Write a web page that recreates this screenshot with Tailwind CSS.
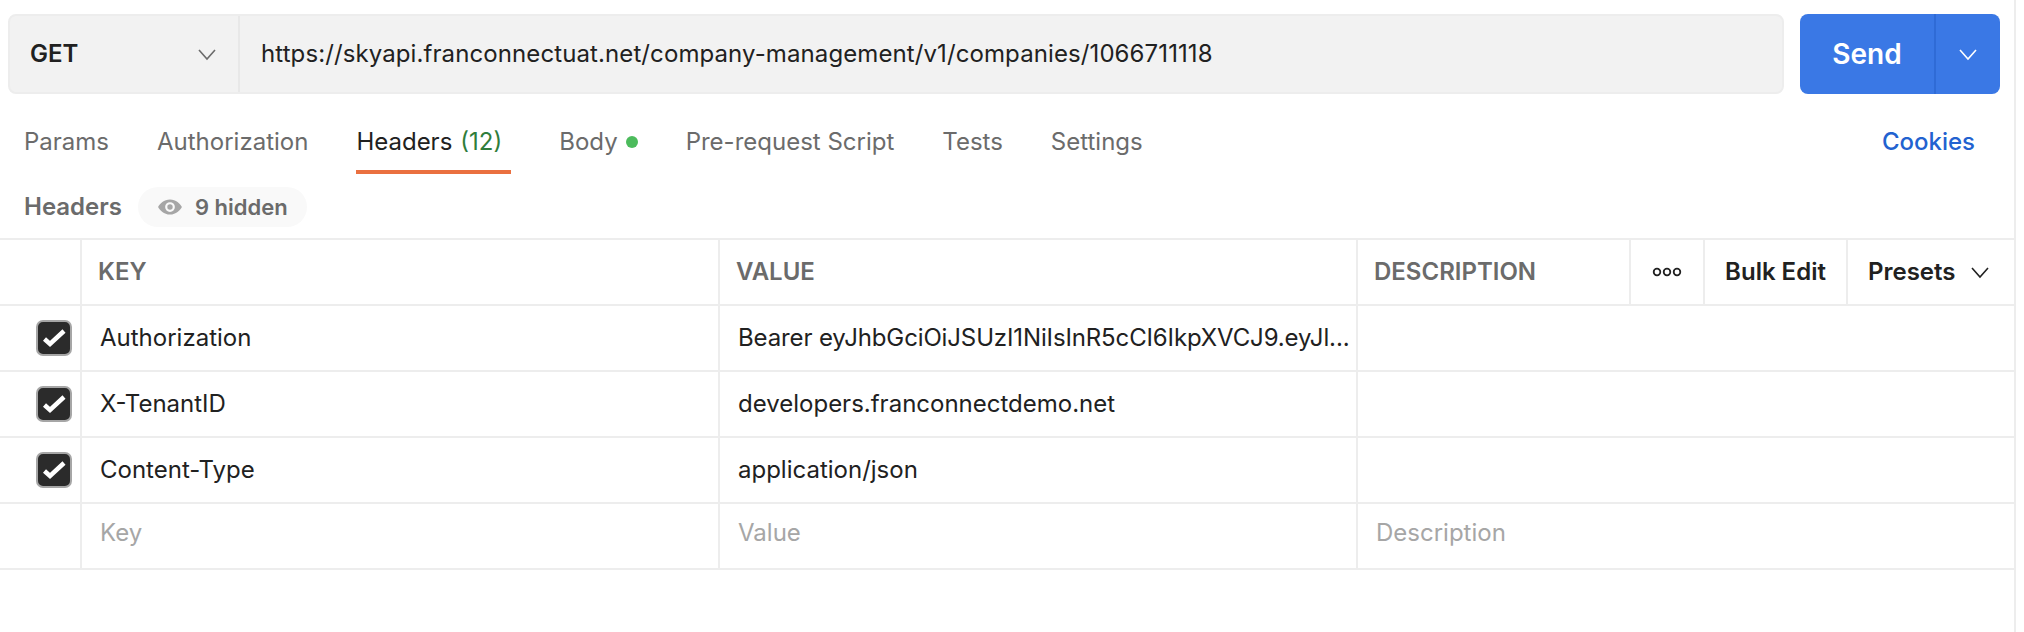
<!DOCTYPE html>
<html lang="en">
<head>
    <meta charset="UTF-8">
    <title>Headers request</title>
    <script src="https://cdn.jsdelivr.net/npm/@tailwindcss/browser@4"></script>
</head>
<body class="bg-white font-['Inter',sans-serif] text-[24px] text-[#212121]">
    <div class="w-[2016px] h-[632px] border-r-2 border-[#ededed]">
        <!-- Request bar -->
        <div class="flex gap-4 pt-[14px] pl-[8px] pr-[14px]">
            <div class="flex flex-1 h-[80px] bg-[#f2f2f2] border-2 border-[#ededed] rounded-[8px]">
                <div class="flex items-center justify-between w-[230px] pl-[20px] pr-[21px] border-r-2 border-[#e8e8e8]">
                    <span class="font-semibold">GET</span>
                    <svg class="w-[20px] h-[20px]" viewBox="0 0 20 20" fill="none" stroke="#6b6b6b" stroke-width="1.6"><path d="M2 6l8 9 8-9"/></svg>
                </div>
                <div class="flex items-center pl-[21px] tracking-[0.1px]">https://skyapi.franconnectuat.net/company-management/v1/companies/1066711118</div>
            </div>
            <div class="flex w-[200px] h-[80px] bg-[#3a78e5] rounded-[8px] text-white">
                <div class="flex items-center justify-center w-[136px] border-r-2 border-[#2f6bd6] text-[28px] font-semibold">Send</div>
                <div class="flex flex-1 items-center justify-center">
                    <svg class="w-[20px] h-[20px]" viewBox="0 0 20 20" fill="none" stroke="#ffffff" stroke-width="1.6"><path d="M2 6l8 9 8-9"/></svg>
                </div>
            </div>
        </div>

        <!-- Tabs -->
        <div class="flex justify-between h-[64px] mt-[16px] pl-[24px] pr-[39px] text-[#6b6b6b]">
            <div class="flex gap-[48px]">
                <div class="flex items-center pt-1 border-b-4 border-transparent">Params</div>
                <div class="flex items-center pt-1 border-b-4 border-transparent">Authorization</div>
                <div class="flex items-center pt-1 pr-[9px] border-b-4 border-[#ea7040] text-[#212121]">Headers<span class="ml-2 text-[#2f7d3b]">(12)</span></div>
                <div class="flex items-center pt-1 border-b-4 border-transparent">Body<span class="ml-2 w-[12px] h-[12px] rounded-full bg-[#4cbb5c]"></span></div>
                <div class="flex items-center pt-1 border-b-4 border-transparent">Pre-request Script</div>
                <div class="flex items-center pt-1 border-b-4 border-transparent">Tests</div>
                <div class="flex items-center pt-1 border-b-4 border-transparent">Settings</div>
            </div>
            <div class="flex items-center pt-1 pb-1 font-medium text-[#2262d0]">Cookies</div>
        </div>

        <!-- Headers label -->
        <div class="flex items-center gap-4 h-[64px] pt-[2px] pl-[24px] text-[#6b6b6b] font-semibold">
            <span>Headers</span>
            <div class="flex items-center gap-[12px] h-[40px] pl-[19px] pr-[19px] bg-[#f9f9f9] rounded-full text-[22px]">
                <svg class="w-[26px] h-[26px]" viewBox="0 0 24 24" fill="#a6a6a6"><path fill-rule="evenodd" d="M12 5C6.500 5 2.500 9 1 12c1.500 3 5.500 7 11 7s9.500-4 11-7c-1.500-3-5.500-7-11-7zm0 2.500a4.500 4.500 0 1 1 0 9 4.500 4.500 0 0 1 0-9z"/><circle cx="12" cy="12" r="2.500"/></svg>
                <span>9 hidden</span>
            </div>
        </div>

        <!-- Table -->
        <div class="grid grid-cols-[82px_638px_638px_1fr] border-t-2 border-[#ededed]">
            <!-- header row -->
            <div class="h-[66px] border-r-2 border-b-2 border-[#ededed]"></div>
            <div class="flex items-center h-[66px] pl-4 border-r-2 border-b-2 border-[#ededed] text-[#6b6b6b] font-semibold">KEY</div>
            <div class="flex items-center h-[66px] pl-4 border-r-2 border-b-2 border-[#ededed] text-[#6b6b6b] font-semibold">VALUE</div>
            <div class="flex h-[66px] border-b-2 border-[#ededed] font-semibold">
                <div class="flex items-center w-[273px] pl-4 border-r-2 border-[#ededed] text-[#6b6b6b]">DESCRIPTION</div>
                <div class="flex items-center justify-center w-[74px] border-r-2 border-[#ededed]">
                    <svg class="w-[30px] h-[10px]" viewBox="0 0 30 10" fill="none" stroke="#212121" stroke-width="1.800"><circle cx="5" cy="5" r="3.300"/><circle cx="15" cy="5" r="3.300"/><circle cx="25" cy="5" r="3.300"/></svg>
                </div>
                <div class="flex items-center justify-center w-[143px] border-r-2 border-[#ededed]">Bulk Edit</div>
                <div class="flex flex-1 items-center justify-between pl-[20px] pr-[24px]">
                    <span>Presets</span>
                    <svg class="w-[20px] h-[20px]" viewBox="0 0 20 20" fill="none" stroke="#212121" stroke-width="1.600"><path d="M2 6l8 9 8-9"/></svg>
                </div>
            </div>

            <!-- Authorization -->
            <div class="flex items-center justify-end h-[66px] pr-[8px] border-r-2 border-b-2 border-[#ededed]">
                <div class="flex items-center justify-center w-[36px] h-[36px] bg-[#2b2b2b] border-2 border-[#a6a6a6] rounded-[7px]">
                    <svg class="w-[28px] h-[28px]" viewBox="0 0 28 28" fill="none" stroke="#ffffff" stroke-width="4.500"><path d="M4.500 15l5.500 5L24 7"/></svg>
                </div>
            </div>
            <div class="flex items-center h-[66px] pl-[18px] border-r-2 border-b-2 border-[#ededed]">Authorization</div>
            <div class="flex items-center h-[66px] pl-[18px] border-r-2 border-b-2 border-[#ededed] whitespace-nowrap tracking-[-0.13px]">Bearer eyJhbGciOiJSUzI1NiIsInR5cCI6IkpXVCJ9.eyJl...</div>
            <div class="h-[66px] border-b-2 border-[#ededed]"></div>

            <!-- X-TenantID -->
            <div class="flex items-center justify-end h-[66px] pr-[8px] border-r-2 border-b-2 border-[#ededed]">
                <div class="flex items-center justify-center w-[36px] h-[36px] bg-[#2b2b2b] border-2 border-[#a6a6a6] rounded-[7px]">
                    <svg class="w-[28px] h-[28px]" viewBox="0 0 28 28" fill="none" stroke="#ffffff" stroke-width="4.500"><path d="M4.500 15l5.500 5L24 7"/></svg>
                </div>
            </div>
            <div class="flex items-center h-[66px] pl-[18px] border-r-2 border-b-2 border-[#ededed]">X-TenantID</div>
            <div class="flex items-center h-[66px] pl-[18px] border-r-2 border-b-2 border-[#ededed]">developers.franconnectdemo.net</div>
            <div class="h-[66px] border-b-2 border-[#ededed]"></div>

            <!-- Content-Type -->
            <div class="flex items-center justify-end h-[66px] pr-[8px] border-r-2 border-b-2 border-[#ededed]">
                <div class="flex items-center justify-center w-[36px] h-[36px] bg-[#2b2b2b] border-2 border-[#a6a6a6] rounded-[7px]">
                    <svg class="w-[28px] h-[28px]" viewBox="0 0 28 28" fill="none" stroke="#ffffff" stroke-width="4.500"><path d="M4.500 15l5.500 5L24 7"/></svg>
                </div>
            </div>
            <div class="flex items-center h-[66px] pl-[18px] border-r-2 border-b-2 border-[#ededed]">Content-Type</div>
            <div class="flex items-center h-[66px] pl-[18px] border-r-2 border-b-2 border-[#ededed]">application/json</div>
            <div class="h-[66px] border-b-2 border-[#ededed]"></div>

            <!-- empty row -->
            <div class="h-[66px] border-r-2 border-b-2 border-[#ededed]"></div>
            <div class="flex items-center h-[66px] pl-[18px] pb-[6px] border-r-2 border-b-2 border-[#ededed] text-[#a6a6a6]">Key</div>
            <div class="flex items-center h-[66px] pl-[18px] pb-[6px] border-r-2 border-b-2 border-[#ededed] text-[#a6a6a6]">Value</div>
            <div class="flex items-center h-[66px] pl-[18px] pb-[6px] border-b-2 border-[#ededed] text-[#a6a6a6]">Description</div>
        </div>
    </div>
</body>
</html>
